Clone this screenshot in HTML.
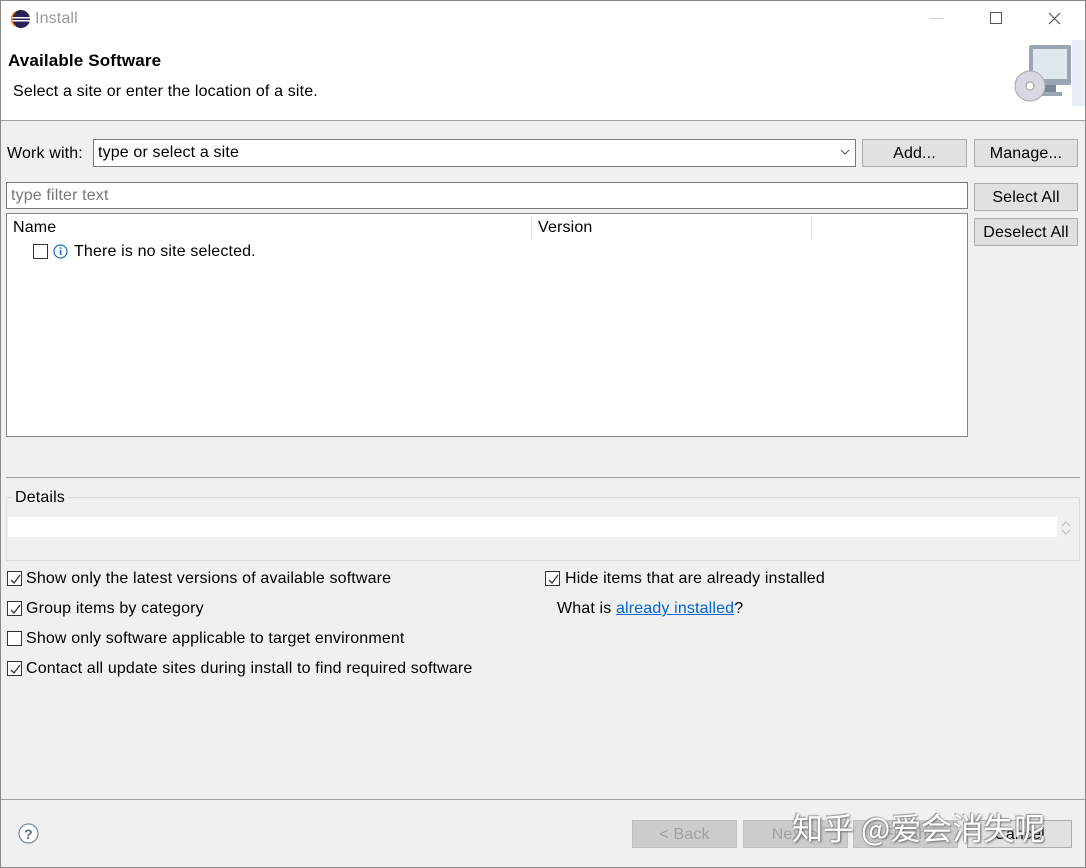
<!DOCTYPE html>
<html><head><meta charset="utf-8"><style>
*{box-sizing:border-box;margin:0;padding:0}
body{width:1086px;height:868px;background:#f0f0f0;font-family:"Liberation Sans","Noto Sans CJK SC",sans-serif;font-size:16px;letter-spacing:0.15px;color:#000;position:relative;overflow:hidden}
.a{position:absolute;white-space:nowrap}
.btn{position:absolute;background:#e1e1e1;border:1px solid #adadad;text-align:center;line-height:28px;font-size:16px}
.dis{color:#a0a0a0;background:#cccccc;border-color:#bfbfbf}
.cb{position:absolute;width:15px;height:15px;border:1px solid #333;background:#fff}
.cb svg{position:absolute;left:1px;top:1px}
</style></head><body>
<div class="a" style="left:0;top:0;width:1086px;height:121px;background:#fff;border-bottom:1px solid #a0a0a0"></div>
<svg class="a" style="left:11px;top:9px" width="20" height="20" viewBox="0 0 20 20"><circle cx="10" cy="10" r="9" fill="#2c2255"/><rect x="1" y="8" width="18" height="1.5" fill="#fff"/><rect x="1" y="11" width="18" height="1.5" fill="#fff"/><path d="M4 3 A9 9 0 0 0 4 17" stroke="#f7941e" stroke-width="1.5" fill="none"/></svg>
<div class="a" style="left:35px;top:10px;color:#999;font-size:16px">Install</div>
<div class="a" style="left:930px;top:18px;width:14px;height:1px;background:#ccc"></div>
<div class="a" style="left:990px;top:12px;width:12px;height:12px;border:1px solid #555"></div>
<svg class="a" style="left:1048px;top:12px" width="13" height="13"><path d="M1 1L12 12M12 1L1 12" stroke="#555" stroke-width="1.2"/></svg>
<div class="a" style="left:8px;top:51px;font-weight:bold;font-size:17px">Available Software</div>
<div class="a" style="left:13px;top:83px">Select a site or enter the location of a site.</div>
<svg class="a" style="left:1010px;top:40px" width="76" height="66" viewBox="0 0 76 66"><rect x="62" y="0" width="14" height="66" fill="#e8eef6"/><rect x="19" y="5" width="42" height="40" rx="2" fill="#9aa6b4"/><rect x="23" y="9" width="34" height="30" fill="#dfe7ef"/><rect x="32" y="45" width="14" height="8" fill="#7d8896"/><rect x="26" y="52" width="26" height="4" fill="#9aa6b4"/><circle cx="20" cy="46" r="15" fill="#d8d8e4" stroke="#aaa"/><circle cx="20" cy="46" r="4" fill="#fff" stroke="#999"/></svg>

<div class="a" style="left:7px;top:145px">Work with:</div>
<div class="a" style="left:93px;top:139px;width:763px;height:28px;background:#fff;border:1px solid #7a7a7a"></div>
<div class="a" style="left:98px;top:144px">type or select a site</div>
<svg class="a" style="left:840px;top:149px" width="10" height="7"><path d="M1 1L5 5L9 1" stroke="#555" fill="none"/></svg>
<div class="btn" style="left:862px;top:139px;width:105px;height:28px">Add...</div>
<div class="btn" style="left:974px;top:139px;width:104px;height:28px">Manage...</div>

<div class="a" style="left:6px;top:182px;width:962px;height:27px;background:#fff;border:1px solid #7a7a7a"></div>
<div class="a" style="left:11px;top:187px;color:#777">type filter text</div>
<div class="btn" style="left:974px;top:183px;width:104px;height:28px">Select All</div>
<div class="btn" style="left:974px;top:218px;width:104px;height:28px">Deselect All</div>

<div class="a" style="left:6px;top:213px;width:962px;height:224px;background:#fff;border:1px solid #828790"></div>
<div class="a" style="left:531px;top:216px;width:1px;height:24px;background:#e5e5e5"></div>
<div class="a" style="left:811px;top:216px;width:1px;height:24px;background:#e5e5e5"></div>
<div class="a" style="left:13px;top:219px">Name</div>
<div class="a" style="left:538px;top:219px">Version</div>
<div class="cb" style="left:33px;top:244px;border-color:#333"></div>
<svg class="a" style="left:53px;top:244px" width="15" height="15"><circle cx="7.5" cy="7.5" r="6.5" fill="#fff" stroke="#1e6fc0" stroke-width="1.2"/><rect x="6.8" y="6" width="1.6" height="5" fill="#1e6fc0"/><rect x="6.8" y="3.3" width="1.6" height="1.6" fill="#1e6fc0"/></svg>
<div class="a" style="left:74px;top:243px">There is no site selected.</div>

<div class="a" style="left:6px;top:477px;width:1074px;height:1px;background:#a0a0a0"></div>
<div class="a" style="left:6px;top:497px;width:1074px;height:64px;border:1px solid #dcdcdc"></div>
<div class="a" style="left:12px;top:489px;background:#f0f0f0;padding:0 3px">Details</div>
<div class="a" style="left:8px;top:517px;width:1049px;height:20px;background:#fff"></div>
<svg class="a" style="left:1061px;top:520px" width="10" height="16"><path d="M1 6L5 2L9 6M1 10L5 14L9 10" stroke="#bbb" fill="none"/></svg>

<div class="cb" style="left:7px;top:571px"><svg width="13" height="13"><path d="M2 7L5 10L11 2" stroke="#333" stroke-width="1.3" fill="none"/></svg></div>
<div class="a" style="left:26px;top:570px">Show only the latest versions of available software</div>
<div class="cb" style="left:7px;top:601px"><svg width="13" height="13"><path d="M2 7L5 10L11 2" stroke="#333" stroke-width="1.3" fill="none"/></svg></div>
<div class="a" style="left:26px;top:600px">Group items by category</div>
<div class="cb" style="left:7px;top:631px"></div>
<div class="a" style="left:26px;top:630px">Show only software applicable to target environment</div>
<div class="cb" style="left:7px;top:661px"><svg width="13" height="13"><path d="M2 7L5 10L11 2" stroke="#333" stroke-width="1.3" fill="none"/></svg></div>
<div class="a" style="left:26px;top:660px">Contact all update sites during install to find required software</div>
<div class="cb" style="left:545px;top:571px"><svg width="13" height="13"><path d="M2 7L5 10L11 2" stroke="#333" stroke-width="1.3" fill="none"/></svg></div>
<div class="a" style="left:565px;top:570px">Hide items that are already installed</div>
<div class="a" style="left:557px;top:600px">What is <span style="color:#0066cc;text-decoration:underline">already installed</span>?</div>

<div class="a" style="left:0;top:799px;width:1086px;height:1px;background:#a0a0a0"></div>
<svg class="a" style="left:18px;top:823px" width="21" height="21"><circle cx="10.5" cy="10.5" r="9.5" fill="#fff" stroke="#7a8a9a" stroke-width="1.2"/><text x="10.5" y="16" font-size="14" font-weight="bold" text-anchor="middle" fill="#5a6a7a" font-family="Liberation Sans">?</text></svg>
<div class="btn dis" style="left:632px;top:820px;width:105px;height:28px">&lt; Back</div>
<div class="btn dis" style="left:743px;top:820px;width:105px;height:28px">Next &gt;</div>
<div class="btn dis" style="left:853px;top:820px;width:105px;height:28px">Finish</div>
<div class="btn" style="left:967px;top:820px;width:105px;height:28px;background:#e1e1e1">Cancel</div>
<div class="a" style="left:792px;top:804px;font-size:31px;letter-spacing:0;color:#fff;text-shadow:1px 1px 2px #666,-1px -1px 1px #999;font-family:'Noto Sans CJK SC',sans-serif">知乎 @爱会消失呢</div>
<div class="a" style="left:0;top:0;width:1086px;height:868px;border:1px solid #888;pointer-events:none"></div>
</body></html>
